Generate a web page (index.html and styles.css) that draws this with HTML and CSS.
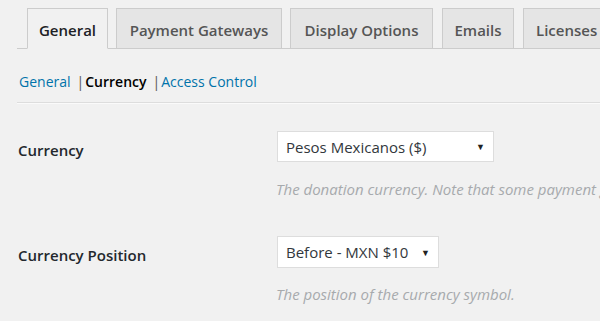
FILE: index.html
```html
<!DOCTYPE html>
<html>
<head>
<meta charset="utf-8">
<link rel="stylesheet" href="styles.css">
</head>
<body>
<div class="wrap">
  <nav class="tabs">
    <a class="tab active t1">General</a>
    <a class="tab t2">Payment Gateways</a>
    <a class="tab t3">Display Options</a>
    <a class="tab t4">Emails</a>
    <a class="tab t5">Licenses</a>
  </nav>
  <div class="subnav">
    <a class="sublink">General</a><span class="sep">|</span><span class="current">Currency</span><span class="sep">|</span><a class="sublink">Access Control</a>
  </div>
  <div class="rule"></div>
  <div class="form">
    <div class="row">
      <div class="label">Currency</div>
      <div class="field">
        <div class="select s1"><span>Pesos Mexicanos ($)</span><span class="arrow">&#9660;</span></div>
        <p class="desc">The donation currency. Note that some payment gateways have currency restrictions.</p>
      </div>
    </div>
    <div class="row row2">
      <div class="label">Currency Position</div>
      <div class="field">
        <div class="select s2"><span>Before - MXN $10</span><span class="arrow">&#9660;</span></div>
        <p class="desc">The position of the currency symbol.</p>
      </div>
    </div>
  </div>
</div>
</body>
</html>
```

FILE: styles.css
```css
html, body {
  margin: 0;
  padding: 0;
  background: #f1f1f1;
  overflow: hidden;
}
body {
  width: 600px;
  height: 321px;
  font-family: "Open Sans", "Noto Sans", sans-serif;
  color: #23282d;
}
.wrap {
  padding-left: 17px;
  width: 583px;
  overflow: hidden;
}
.tabs {
  display: flex;
  align-items: flex-end;
  height: 49px;
  border-bottom: 1px solid #cccccc;
  padding-left: 10px;
  box-sizing: border-box;
  width: 700px;
}
.tab {
  box-sizing: border-box;
  height: 41px;
  margin-bottom: -1px;
  border: 1px solid #cccccc;
  background: #e5e5e5;
  color: #555555;
  font-size: 15px;
  font-weight: 600;
  display: flex;
  align-items: center;
  justify-content: center;
  padding-top: 3px;
  white-space: nowrap;
  flex: none;
}
.tab.active {
  background: #f1f1f1;
  border-bottom-color: #f1f1f1;
  color: #1d2125;
}
.t1 { width: 81px; }
.t2 { width: 166px; margin-left: 8px; }
.t3 { width: 143px; margin-left: 8px; }
.t4 { width: 72px; margin-left: 9px; }
.t5 { width: 95px; margin-left: 9px; justify-content: flex-start; padding-left: 12px; }
.subnav {
  height: 53px;
  display: flex;
  align-items: flex-start;
  font-size: 14px;
  line-height: 20px;
  padding-left: 2px;
  padding-top: 23px;
  box-sizing: border-box;
}
.sublink { color: #0073aa; }
.current { color: #000000; font-weight: 600; }
.sep { color: #555555; margin: 0 1px 0 6px; }
.rule {
  border-top: 1px solid #dddddd;
  border-bottom: 1px solid #fafafa;
}
.form {
  padding-top: 27px;
}
.row {
  display: flex;
}
.row2 { margin-top: 37px; }
.label {
  width: 259px;
  flex: none;
  font-size: 15px;
  font-weight: 600;
  padding-left: 1px;
  padding-top: 9px;
}
.field { flex: none; }
.select {
  box-sizing: border-box;
  background: #ffffff;
  border: 1px solid #dddddd;
  height: 31px;
  display: flex;
  align-items: center;
  justify-content: space-between;
  padding: 0 8px 0 8px;
  font-size: 15px;
  color: #32373c;
}
.s1 { width: 217px; }
.s2 { width: 162px; height: 32px; }
.arrow {
  font-size: 9px;
  color: #222222;
}
.desc {
  margin: 17px 0 0 -1px;
  font-size: 15px;
  line-height: 20px;
  font-style: italic;
  color: #a7aaad;
  white-space: nowrap;
}
.s2 + .desc { margin-top: 16px; }
```
